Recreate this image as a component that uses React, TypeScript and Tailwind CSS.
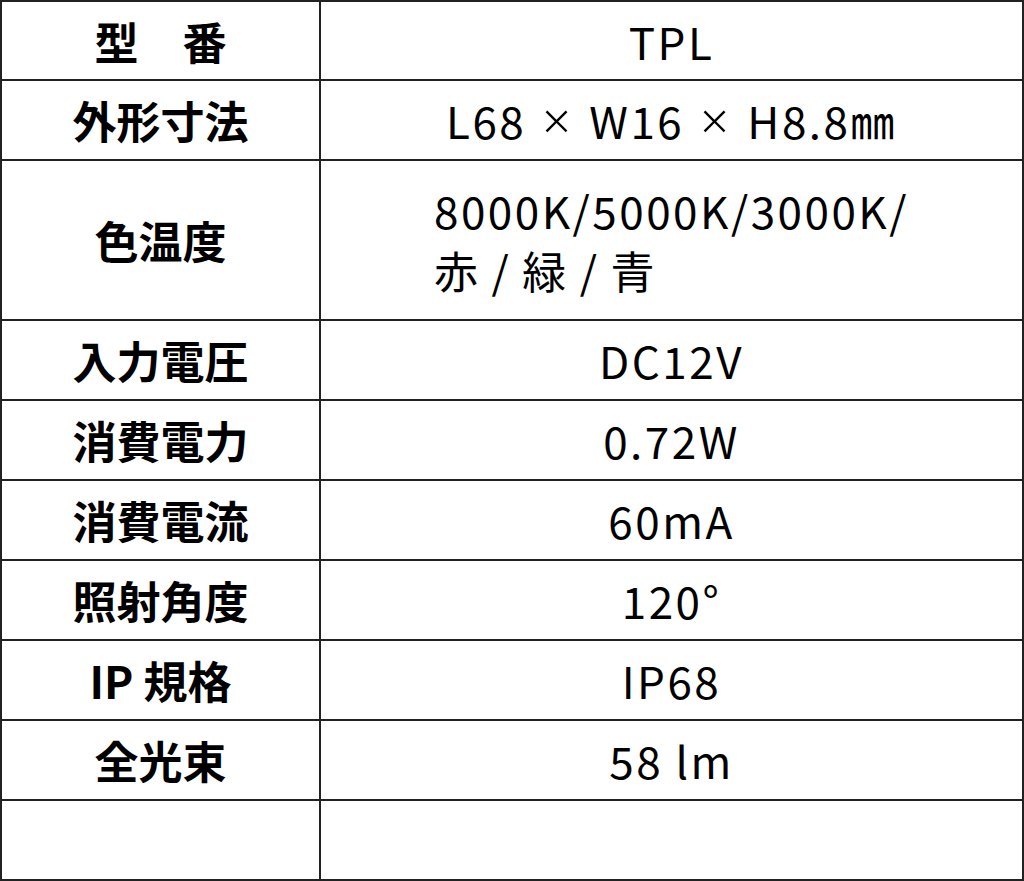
const Times = () => (
  <span
    className="inline-block mx-[16px] text-[50px] leading-none font-light"
    style={{ fontFamily: '"Noto Sans", sans-serif' }}
  >
    ×
  </span>
);

const Slash = () => <span className="inline-block mx-[11px]">/</span>;

const rows: { label: string; value: React.ReactNode; tall?: boolean }[] = [
  { label: '型　番', value: 'TPL' },
  {
    label: '外形寸法',
    value: (
      <span>
        L68<Times />W16<Times />H8.8㎜
      </span>
    ),
  },
  {
    label: '色温度',
    tall: true,
    value: (
      <span className="inline-block text-left leading-[60px]">
        8000K/5000K/3000K/
        <br />
        赤<Slash />緑<Slash />青
      </span>
    ),
  },
  { label: '入力電圧', value: 'DC12V' },
  { label: '消費電力', value: '0.72W' },
  { label: '消費電流', value: '60mA' },
  { label: '照射角度', value: '120°' },
  { label: 'IP 規格', value: 'IP68' },
  { label: '全光束', value: '58 lm' },
];

export default function App() {
  return (
    <div
      className="w-[1024px] h-[881px] bg-white border-2 border-[#222] flex flex-col text-black"
      style={{ fontFamily: '"Noto Sans CJK JP", "Noto Sans", sans-serif' }}
    >
      {rows.map((row, i) => (
        <div
          key={row.label}
          className={`flex border-b-2 border-[#222] ${
            row.tall ? 'h-[160px]' : i === 0 ? 'h-[79px]' : 'h-[80px]'
          }`}
        >
          <div className="w-[319px] shrink-0 border-r-2 border-[#222] flex items-center justify-center text-[44px] font-bold">
            {row.label}
          </div>
          <div className="flex-1 flex items-center justify-center text-[44px] font-normal tracking-[2.5px]">
            {row.value}
          </div>
        </div>
      ))}
      {/* empty last row */}
      <div className="flex h-[78px]">
        <div className="w-[319px] shrink-0 border-r-2 border-[#222]" />
        <div className="flex-1" />
      </div>
    </div>
  );
}
